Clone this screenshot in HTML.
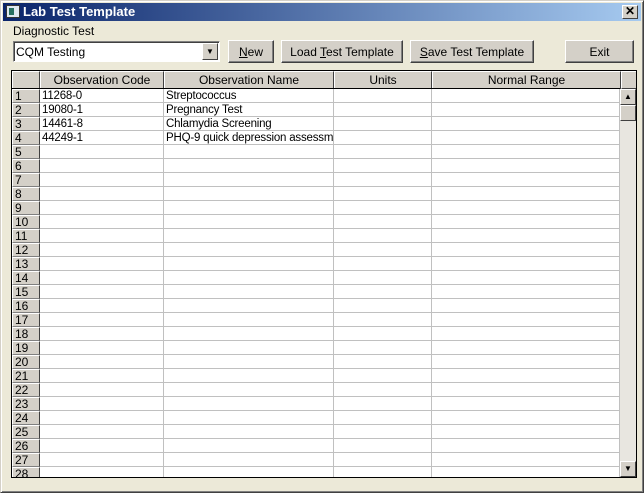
<!DOCTYPE html><html><head><style>
*{box-sizing:border-box;margin:0;padding:0}
body{width:644px;height:493px;background:#ece9d8;font-family:"Liberation Sans",sans-serif;font-size:12px;position:relative;overflow:hidden}
.win{position:absolute;left:0;top:0;width:644px;height:493px;border:1px solid #d4d0c8;border-right-color:#404040;border-bottom-color:#404040;box-shadow:inset 1px 1px 0 #fff,inset -1px -1px 0 #808080}
.title{position:absolute;left:3px;top:3px;width:638px;height:18px;background:linear-gradient(to right,#0a246a,#a6caf0);color:#fff;font-weight:bold;font-size:13px;line-height:18px;padding-left:20px}
.ico{position:absolute;left:3px;top:2px;width:14px;height:13px;background:#dfe8f0;border:1px solid #333}
.ico:after{content:"";position:absolute;left:2px;top:2px;width:5px;height:7px;background:#287060}
.close{position:absolute;right:3px;top:2px;width:16px;height:14px;background:#d4d0c8;border:1px solid;border-color:#fff #404040 #404040 #fff;color:#000;font-size:12px;line-height:11px;text-align:center;font-weight:bold}
.abs{position:absolute}
.btn{position:absolute;background:#d4d0c8;border:1px solid;border-color:#fff #404040 #404040 #fff;box-shadow:inset -1px -1px 0 #808080;text-align:center;line-height:22px}
.grid{position:absolute;left:11px;top:70px;width:626px;height:408px;border:1px solid #000;background:#fff;overflow:hidden}
.hdr{position:absolute;top:0;height:18px;background:#d4d0c8;border:1px solid;border-color:#fff #404040 #404040 #fff;text-align:center;line-height:17px}
.row{position:absolute;left:0;height:14px;width:608px;border-bottom:1px solid #c0c0c0}
.rh{position:absolute;left:0;top:0;width:28px;height:14px;background:#d4d0c8;border:1px solid;border-color:#fff #404040 #808080 #fff;line-height:13px;padding-left:2px;font-size:12px}
.c{position:absolute;top:0;height:13px;line-height:14px;padding-left:2px;border-right:1px solid #c0c0c0;white-space:nowrap;overflow:hidden;font-size:11.5px;letter-spacing:-0.2px}
.sb{position:absolute;left:608px;top:18px;width:16px;height:390px;background:#e8e6e0}
.sbb{position:absolute;left:0;width:16px;height:16px;background:#d4d0c8;border:1px solid;border-color:#fff #404040 #404040 #fff;font-size:8px;text-align:center;line-height:14px}
</style></head><body>
<div class="win"></div>
<div class="title"><div class="ico"></div>Lab Test Template<div class="close">✕</div></div>
<div class="abs" style="left:13px;top:24px">Diagnostic Test</div>
<div class="abs" style="left:13px;top:41px;width:207px;height:21px;background:#fff;border:1px solid;border-color:#808080 #fff #fff #808080;box-shadow:inset 1px 1px 0 #404040;padding-left:2px;line-height:20px">CQM Testing
<div style="position:absolute;right:1px;top:1px;width:16px;height:17px;background:#d4d0c8;border:1px solid;border-color:#fff #404040 #404040 #fff;font-size:8px;text-align:center;line-height:15px">▼</div></div>
<div class="btn" style="left:228px;top:40px;width:46px;height:23px"><u>N</u>ew</div>
<div class="btn" style="left:281px;top:40px;width:122px;height:23px">Load <u>T</u>est Template</div>
<div class="btn" style="left:410px;top:40px;width:124px;height:23px"><u>S</u>ave Test Template</div>
<div class="btn" style="left:565px;top:40px;width:69px;height:23px">Exit</div>
<div class="grid">
<div class="hdr" style="left:0;width:28px"></div>
<div class="hdr" style="left:28px;width:124px">Observation Code</div>
<div class="hdr" style="left:152px;width:170px">Observation Name</div>
<div class="hdr" style="left:322px;width:98px">Units</div>
<div class="hdr" style="left:420px;width:189px">Normal Range</div>
<div class="hdr" style="left:609px;width:16px"></div>
<div style="position:absolute;left:0;top:17px;width:608px;height:1px;background:#000"></div>
<div id="rows"></div>
<div class="sb"><div class="sbb" style="top:0">▲</div><div class="sbb" style="top:16px;height:16px"></div><div class="sbb" style="top:372px">▼</div></div>
</div>
<script>
var d=[["11268-0","Streptococcus"],["19080-1","Pregnancy Test"],["14461-8","Chlamydia Screening"],["44249-1","PHQ-9 quick depression assessme"]];
var h="";for(var i=0;i<28;i++){var r=d[i]||["",""];h+='<div class="row" style="top:'+(18+i*14)+'px"><div class="rh">'+(i+1)+'</div><div class="c" style="left:28px;width:124px">'+r[0]+'</div><div class="c" style="left:152px;width:170px">'+r[1]+'</div><div class="c" style="left:322px;width:98px"></div><div class="c" style="left:420px;width:188px"></div></div>';}
document.getElementById("rows").innerHTML=h;
</script>
</body></html>
